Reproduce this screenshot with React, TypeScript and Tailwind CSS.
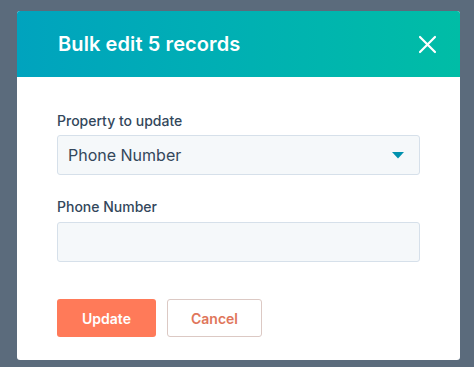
export default function App() {
  return (
    <div
      className="w-[474px] h-[367px] bg-[#5b6b7c] pt-[11px] pl-[17px]"
      style={{ fontFamily: "Inter, 'Noto Sans', sans-serif" }}
    >
      <div className="w-[443px] h-[349px] bg-white rounded-[3px] overflow-hidden flex flex-col">
        {/* Header */}
        <div className="h-[66px] shrink-0 flex items-center justify-between pl-[41px] pr-[22px] bg-gradient-to-r from-[#00a3be] to-[#00bda6]">
          <h1 className="text-white text-[20px] font-semibold tracking-[0.1px]">Bulk edit 5 records</h1>
          <svg width="19" height="19" viewBox="0 0 19 19" className="mr-[1px]">
            <path d="M2 2 L17 17 M17 2 L2 17" stroke="white" strokeWidth="2.2" strokeLinecap="round" />
          </svg>
        </div>

        {/* Body */}
        <div className="flex flex-col pl-[40px] pr-[40px] pt-[35px]">
          <label className="text-[14px] font-medium text-[#33475b] leading-[18px]">Property to update</label>
          <div className="mt-[5px] h-[40px] rounded-[3px] border border-[#d6e0ea] bg-[#f5f8fa] flex items-center justify-between pl-[10px] pr-[15px]">
            <span className="text-[16px] text-[#33475b]">Phone Number</span>
            <svg width="12" height="7" viewBox="0 0 12 7">
              <path d="M0 0 H12 L6 6.5 Z" fill="#0091ae" />
            </svg>
          </div>

          <label className="mt-[23px] text-[14px] font-medium text-[#33475b] leading-[18px]">Phone Number</label>
          <div className="mt-[6px] h-[40px] rounded-[3px] border border-[#d6e0ea] bg-[#f5f8fa]" />

          <div className="mt-[37px] flex gap-[11px]">
            <button className="w-[99px] h-[38px] rounded-[3px] bg-[#ff7a59] text-white text-[14px] font-semibold">
              Update
            </button>
            <button className="w-[95px] h-[38px] rounded-[3px] border border-[#dcc9c4] bg-white text-[#e0765b] text-[14px] font-semibold">
              Cancel
            </button>
          </div>
        </div>
      </div>
    </div>
  );
}
